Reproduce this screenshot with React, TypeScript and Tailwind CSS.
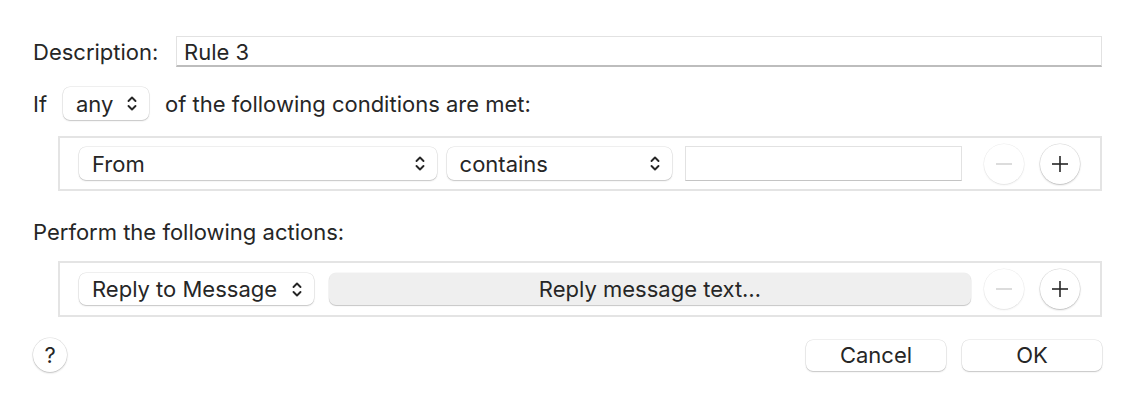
import React from 'react'

// macOS "Rules" edit sheet (Mail) – condition / action editor

const font = { fontFamily: 'Inter, "Noto Sans", sans-serif' }

function Chevrons() {
	return (
		<svg width="10" height="17" viewBox="0 0 10 17" className="shrink-0">
			<path d="M1.5 6 L5 2.5 L8.5 6" fill="none" stroke="#262626" strokeWidth="1.9" strokeLinecap="round" strokeLinejoin="round" />
			<path d="M1.5 11 L5 14.5 L8.5 11" fill="none" stroke="#262626" strokeWidth="1.9" strokeLinecap="round" strokeLinejoin="round" />
		</svg>
	)
}

function PopUp({ label, className }: { label: string; className: string }) {
	return (
		<div
			className={`flex items-center justify-between rounded-[7px] bg-white pl-[13px] pr-[12px] shadow-[0_0_0_0.5px_rgba(0,0,0,0.12),0_1px_1.5px_rgba(0,0,0,0.18)] ${className}`}
		>
			<span>{label}</span>
			<Chevrons />
		</div>
	)
}

function RoundButton({ kind }: { kind: 'plus' | 'minus' }) {
	const enabled = kind === 'plus'
	return (
		<div
			className={`flex h-[40px] w-[40px] shrink-0 items-center justify-center rounded-full bg-white ${
				enabled
					? 'shadow-[0_0_0_0.5px_rgba(0,0,0,0.14),0_1px_2px_rgba(0,0,0,0.2)]'
					: 'shadow-[0_0_0_0.5px_rgba(0,0,0,0.07),0_1px_2px_rgba(0,0,0,0.08)]'
			}`}
		>
			<svg width="20" height="20" viewBox="0 0 20 20">
				<path d="M2 10 H18" stroke={enabled ? '#262626' : '#d4d4d4'} strokeWidth="1.6" />
				{enabled && <path d="M10 2 V18" stroke="#262626" strokeWidth="1.6" />}
			</svg>
		</div>
	)
}

function PushButton({ label, className }: { label: string; className: string }) {
	return (
		<div
			className={`flex h-[31px] items-center justify-center rounded-[7px] bg-white shadow-[0_0_0_0.5px_rgba(0,0,0,0.12),0_1px_1.5px_rgba(0,0,0,0.18)] ${className}`}
		>
			{label}
		</div>
	)
}

export default function App() {
	return (
		<div
			className="flex h-[400px] w-[1134px] flex-col bg-white pl-[33px] pr-[32px] text-[22px] leading-none text-[#262626]"
			style={font}
		>
			{/* Description */}
			<div className="mt-[36px] flex h-[31px] items-center">
				<span className="w-[143px] shrink-0">Description:</span>
				<div className="flex h-[31px] flex-1 items-center border border-b-2 border-[#e2e2e2] border-b-[#bdbdbd] bg-white pl-[7px] pt-[2px]">
					Rule 3
				</div>
			</div>

			{/* Conditions header */}
			<div className="mt-[20px] flex h-[33px] items-center">
				<span className="w-[30px] shrink-0">If</span>
				<PopUp label="any" className="h-[33px] w-[86px]" />
				<span className="ml-[16px]">of the following conditions are met:</span>
			</div>

			{/* Condition row */}
			<div className="ml-[25px] mt-[16px] flex h-[55px] items-center border-2 border-[#e4e4e4] pl-[19px] pr-[20px]">
				<PopUp label="From" className="h-[33px] w-[358px]" />
				<PopUp label="contains" className="ml-[10px] h-[33px] w-[226px]" />
				<div className="ml-[13px] h-[35px] w-[277px] border border-[#e2e2e2] border-b-[#c4c4c4] bg-white" />
				<div className="ml-[22px]">
					<RoundButton kind="minus" />
				</div>
				<div className="ml-[16px]">
					<RoundButton kind="plus" />
				</div>
			</div>

			{/* Actions header */}
			<div className="mt-[30px] flex h-[22px] items-center">Perform the following actions:</div>

			{/* Action row */}
			<div className="ml-[25px] mt-[18px] flex h-[56px] items-center border-2 border-[#e4e4e4] pl-[19px] pr-[20px]">
				<PopUp label="Reply to Message" className="h-[32px] w-[235px]" />
				<div className="ml-[15px] flex h-[32px] w-[642px] items-center justify-center rounded-[7px] bg-[#efefef] shadow-[0_0_0_0.5px_rgba(0,0,0,0.06),0_1px_1px_rgba(0,0,0,0.2)]">
					Reply message text…
				</div>
				<div className="ml-[13px]">
					<RoundButton kind="minus" />
				</div>
				<div className="ml-[16px]">
					<RoundButton kind="plus" />
				</div>
			</div>

			{/* Footer */}
			<div className="mt-[21px] flex h-[34px] items-center">
				<div className="flex h-[34px] w-[34px] items-center justify-center rounded-full bg-white shadow-[0_0_0_0.5px_rgba(0,0,0,0.12),0_1px_2px_rgba(0,0,0,0.2)]">
					?
				</div>
				<div className="flex-1" />
				<PushButton label="Cancel" className="w-[140px]" />
				<PushButton label="OK" className="ml-[16px] w-[140px]" />
			</div>
		</div>
	)
}
